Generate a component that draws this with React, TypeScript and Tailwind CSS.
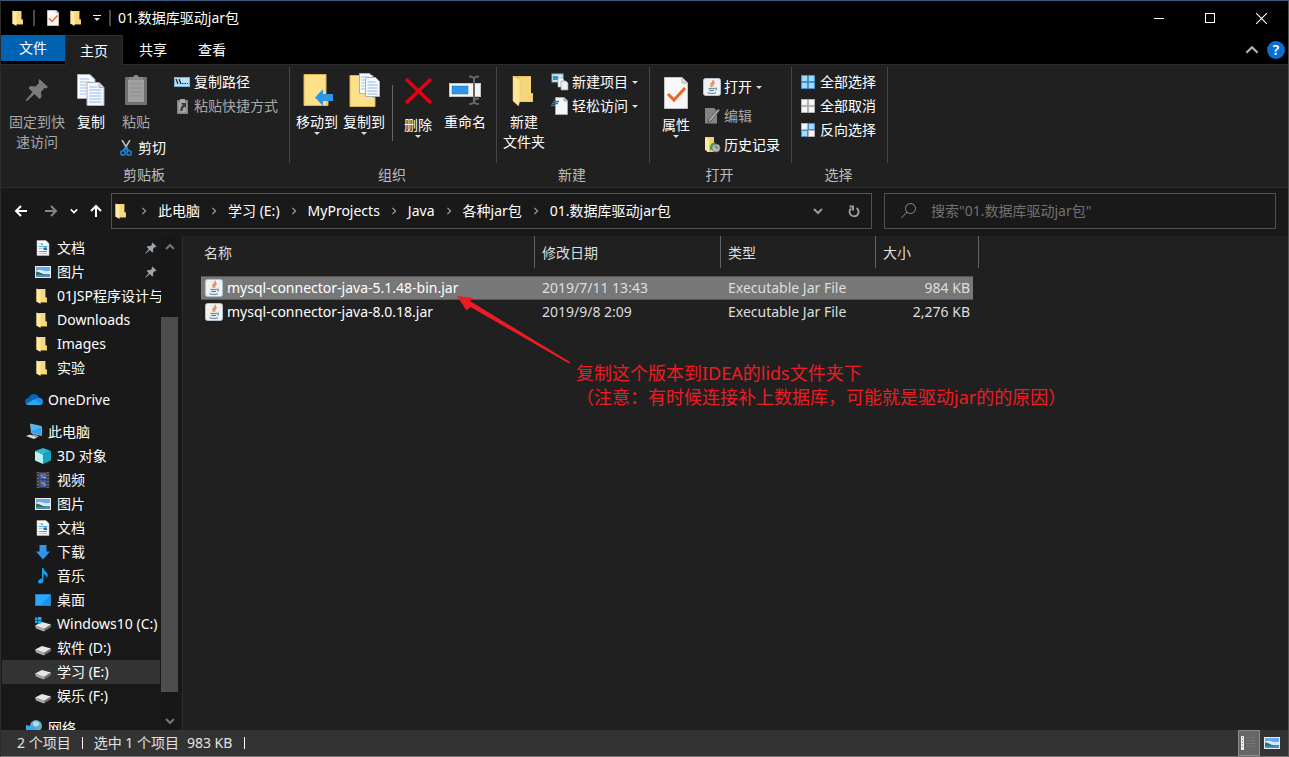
import type { ReactNode } from 'react';

/* ---------- Icons ---------- */

function FolderIcon({ className = 'w-4 h-4' }: { className?: string }) {
  return (
    <svg viewBox="0 0 16 16" className={className} aria-hidden="true">
      <path d="M1.500 1h9v8.500H12V14.500H5L1.500 14Z" fill="#e9bf55" />
      <path d="M5 1h5v8.500h1.500V14H5Z" fill="#f6d87e" />
      <path d="M1.500 .500L5.500 2v14L1.500 13.500Z" fill="#ffeaa8" />
    </svg>
  );
}

function NewFolderIcon() {
  return (
    <svg viewBox="0 0 24 32" className="w-6 h-8" aria-hidden="true">
      <path d="M1 2h18v17h2v9H5Z" fill="#e6bd58" />
      <path d="M7 3h12v17h1.500v7.500H7Z" fill="#f5d67b" />
      <path d="M1 2l7 4v20l-1.500 6L1 27Z" fill="#ffe699" stroke="#e8c566" strokeWidth=".5" />
    </svg>
  );
}

function PinIcon({ className = 'w-6 h-6', fill = '#7b7b7b' }: { className?: string; fill?: string }) {
  return (
    <svg viewBox="0 0 24 24" className={className} aria-hidden="true">
      <path d="M14.500 1l8.500 8-2 1.500-1.500-.5-3.500 4 .5 5-2 2-5-5L2 23l-1.500-.5 7-8.500-4-4 2-2 5 .5L14 5l-.5-2Z" fill={fill} />
    </svg>
  );
}

function CopyIcon() {
  return (
    <svg viewBox="0 0 28 32" className="w-7 h-8" aria-hidden="true">
      <path d="M.5.500H13l5 5v19H.5Z" fill="#f6f9fd" stroke="#a9b0b8" />
      <path d="M3 5h9M3 8h11M3 11h6M3 14h6M3 17h6M3 20h6" stroke="#9cc1ee" />
      <path d="M10 8.500h12l5 5v18H10Z" fill="#f6f9fd" stroke="#a9b0b8" />
      <path d="M22 8.500v5h5" fill="#d7dfe8" stroke="#a9b0b8" />
      <path d="M12.500 13h8M12.500 16h12M12.500 19h12M12.500 22h12M12.500 25h12M12.500 28h12" stroke="#8fb8ea" />
    </svg>
  );
}

function PasteIcon() {
  return (
    <svg viewBox="0 0 24 32" className="w-6 h-8" aria-hidden="true">
      <rect x="1" y="3" width="22" height="28" rx="1" fill="#717171" />
      <rect x="4" y="6" width="16" height="22" fill="#a0a0a0" />
      <path d="M6 10h12M6 14h12M6 18h12M6 22h12" stroke="#8d8d8d" />
      <path d="M5 6V3h4q3-4.500 6 0h4v3Z" fill="#8b8b8b" />
    </svg>
  );
}

function CutIcon() {
  return (
    <svg viewBox="0 0 12 17" className="w-3 h-[17px]" aria-hidden="true">
      <path d="M2 0l6 10M10 0L4 10" stroke="#b9c3cb" strokeWidth="1.500" />
      <circle cx="3" cy="13" r="2.200" fill="none" stroke="#1c86cf" strokeWidth="1.500" />
      <circle cx="9" cy="13" r="2.200" fill="none" stroke="#1c86cf" strokeWidth="1.500" />
      <path d="M6 7L4 11M6 7l2 4" stroke="#1c86cf" strokeWidth="2" />
    </svg>
  );
}

function CopyPathIcon() {
  return (
    <svg viewBox="0 0 16 16" className="w-4 h-4" aria-hidden="true">
      <rect x=".5" y="3.500" width="15" height="9" fill="#b7e0fb" stroke="#7ab4dc" />
      <path d="M2 5l2 5M5 5l2 5M8 9.500h1.500M10.500 9.500H12M13 9.500h1" stroke="#17212b" strokeWidth="1.200" />
    </svg>
  );
}

function PasteShortcutIcon() {
  return (
    <svg viewBox="0 0 16 16" className="w-4 h-4" aria-hidden="true">
      <rect x="3" y="2" width="11" height="14" fill="#828282" />
      <path d="M6 1h5v3H6Z" fill="#a9a9a9" />
      <rect x="4.500" y="4" width="8" height="10.500" fill="#a5a5a5" />
      <path d="M7 5h5v5l-1.600-1.600Q8.500 10 8.500 13H6q0-4 2.700-6.300Z" fill="#3c3c3c" />
    </svg>
  );
}

function MoveToIcon() {
  return (
    <svg viewBox="0 0 32 32" className="w-8 h-8" aria-hidden="true">
      <path d="M3 .500h22v22h2v9H3Z" fill="#ffe08a" stroke="#dcb452" />
      <path d="M25 .500v31h2v-9h-2Z" fill="#eec765" />
      <path d="M14 23.500L22 15v5h10v7H22v5Z" fill="#3195e6" />
    </svg>
  );
}

function CopyToIcon() {
  return (
    <svg viewBox="0 0 32 34" className="w-8 h-[34px]" aria-hidden="true">
      <path d="M2 2.500h23v22h2v9H2Z" fill="#ffe08a" stroke="#dcb452" />
      <path d="M11.500.500h10l4 4v16h-14Z" fill="#f7f9fc" stroke="#a9b0b8" />
      <path d="M13 4h8M13 7h4M13 10h4M13 13h4M13 16h4" stroke="#9cc1ee" />
      <path d="M17.500 4.500h10l4 4v15h-14Z" fill="#f7f9fc" stroke="#a9b0b8" />
      <path d="M19.500 9h8M19.500 12h10M19.500 15h10M19.500 18h10M19.500 21h10" stroke="#8fb8ea" />
    </svg>
  );
}

function DeleteIcon() {
  return (
    <svg viewBox="0 0 32 32" className="w-8 h-8" aria-hidden="true">
      <path d="M4 2l25 24M29 2L4 26" stroke="#e60012" strokeWidth="3.500" />
    </svg>
  );
}

function RenameIcon() {
  return (
    <svg viewBox="0 0 32 32" className="w-8 h-8" aria-hidden="true">
      <rect x=".5" y="9.500" width="31" height="13" fill="#f5f5f5" stroke="#c7c7c7" />
      <rect x="3" y="12" width="16" height="8" fill="#2f96ea" stroke="#1f78c3" strokeWidth=".5" />
      <path d="M20 2.500q5 0 5 3v22q0-3 5-3M30 2.500q-5 0-5 3M20 30q5 0 5-3M30 30q-5 0-5-3" fill="none" stroke="#666" strokeWidth="2" />
    </svg>
  );
}

function NewItemIcon() {
  return (
    <svg viewBox="0 0 18 18" className="w-[18px] h-[18px]" aria-hidden="true">
      <rect x="1" y="1" width="11" height="8" fill="#cfe9f8" stroke="#8bb5cf" />
      <path d="M2 3h5v4H2Z" fill="#3b93b8" />
      <path d="M7 5h4l2 2v7H7Z" fill="#fff" stroke="#aaa" strokeWidth=".7" />
      <path d="M10 8h5l2 2v7h-7Z" fill="#e6effa" stroke="#999" strokeWidth=".7" />
    </svg>
  );
}

function EasyAccessIcon() {
  return (
    <svg viewBox="0 0 18 18" className="w-[18px] h-[18px]" aria-hidden="true">
      <path d="M4.500.500H13l3.500 3.500v13.500h-12Z" fill="#f4f6f8" stroke="#a5a5a5" />
      <path d="M13 .500V4h3.500" fill="#ccc" stroke="#a5a5a5" />
      <path d="M2 4.500h6M1 6.500h6M0 8.500h4" stroke="#1e76bd" strokeWidth="1.300" />
    </svg>
  );
}

function CheckDocIcon({ className = 'w-6 h-8' }: { className?: string }) {
  return (
    <svg viewBox="0 0 24 32" className={className} aria-hidden="true">
      <path d="M.5.500H18l5.500 5.500v25.500H.5Z" fill="#f8f8f8" stroke="#c4c4c4" />
      <path d="M18 .500V6h5.500" fill="#ddd" stroke="#b5b5b5" />
      <path d="M4 17l6 6 11-12" fill="none" stroke="#f26522" strokeWidth="3" />
    </svg>
  );
}

function JarIcon() {
  return (
    <svg viewBox="0 0 18 18" className="w-[18px] h-[18px] shrink-0" aria-hidden="true">
      <rect x=".5" y=".5" width="17" height="17" rx="2" fill="#eef2f4" stroke="#b4c2cb" />
      <path d="M10 2q.8 1.800-1.300 3.200-1.900 1.500.4 4M11.800 4.500Q9 5.800 10.200 8.200" fill="none" stroke="#f0702a" strokeWidth="1.200" />
      <path d="M5.500 10.300q3.500.9 6.500 0M6 12.200q3 .8 5 0M4.500 14.800q4.500 1.300 8.500 0M12.300 10q2.200.2.200 2.300" fill="none" stroke="#5d8296" strokeWidth="1.100" />
    </svg>
  );
}

function EditIcon() {
  return (
    <svg viewBox="0 0 18 18" className="w-[18px] h-[18px]" aria-hidden="true">
      <path d="M2 1h9l3 3v12.500H2Z" fill="#848484" />
      <path d="M17 3L8 14l-3 1 1-3 9-10Z" fill="#a9a9a9" stroke="#444" strokeWidth=".7" />
    </svg>
  );
}

function HistoryIcon() {
  return (
    <svg viewBox="0 0 18 18" className="w-[18px] h-[18px]" aria-hidden="true">
      <path d="M2 1h9v15H4Z" fill="#f1cf6c" />
      <path d="M2 1l4 2v13l-4-2Z" fill="#ffe9a5" />
      <circle cx="13" cy="12" r="4" fill="#b9b9b9" stroke="#777" strokeWidth=".8" />
      <path d="M13 9.500V12h2" fill="none" stroke="#555" />
      <path d="M12 7q-5 1-4 7" fill="none" stroke="#2aa847" strokeWidth="2" />
    </svg>
  );
}

function SelectIcon({ fills }: { fills: string[] }) {
  return (
    <svg viewBox="0 0 16 16" className="w-4 h-4" aria-hidden="true">
      {fills.map((fill, i) => (
        <rect
          key={i}
          x={i % 2 ? 8.5 : 1.5}
          y={i > 1 ? 8.5 : 1.5}
          width="6"
          height="6"
          fill={fill}
          stroke={fill === '#a5d8fd' ? '#3d9be0' : '#bdbdbd'}
          strokeWidth=".8"
        />
      ))}
    </svg>
  );
}

function DocumentIcon() {
  return (
    <svg viewBox="0 0 16 16" className="w-4 h-4" aria-hidden="true">
      <path d="M2 .500h9l3 3v12H2Z" fill="#fafafa" stroke="#bbb" strokeWidth=".6" />
      <path d="M4 3.500h4M4 8.500h4M4 13.500h8" stroke="#b5c3cd" />
      <path d="M6 4.500h2M3.500 6.500h9M4 11.500h8" stroke="#4aa9dd" />
      <path d="M8.500 7.500h3.500v2.500H8.500Z" fill="#20659c" />
    </svg>
  );
}

function PictureIcon() {
  return (
    <svg viewBox="0 0 16 16" className="w-4 h-4" aria-hidden="true">
      <rect x="0" y="2" width="16" height="12" fill="#e8ecef" />
      <rect x="1" y="3" width="14" height="10" fill="#6aa9ee" />
      <path d="M1 6.500q4-1.500 7 0t7 0V10H1Z" fill="#d3ebfb" />
      <path d="M1 7.500q3 0 5 1.500t9 1.500V12H1Z" fill="#2f6f6a" />
      <path d="M1 11h14v2H1Z" fill="#4f8cb8" />
    </svg>
  );
}

function OneDriveIcon() {
  return (
    <svg viewBox="0 0 18 16" className="w-[18px] h-4" aria-hidden="true">
      <path d="M4 13q-4 0-4-3.500T3.500 6Q5 2 9 2q3.500 0 5 4l-6 5Z" fill="#0a63bb" />
      <path d="M8 8l5-2.500q5 .5 5 4T14.500 13H4Z" fill="#1a8fe3" />
      <path d="M1 12l8-4.500 7.500 5Q15.500 13 14.500 13H4q-2 0-3-1Z" fill="#2aa7ee" />
    </svg>
  );
}

function ComputerIcon() {
  return (
    <svg viewBox="0 0 18 18" className="w-[18px] h-[18px]" aria-hidden="true">
      <path d="M5.500 1L16.500 3.500v9L6.500 10Z" fill="#31a3f3" stroke="#a9cbe0" strokeWidth=".7" />
      <path d="M5.500 1L16.500 3.500 7 8Z" fill="#55b6f7" />
      <path d="M8 11l6 2-2 1.500-5-2Z" fill="#999" />
      <path d="M1 13L5 11.500l7 3L9 16Z" fill="#d9dde0" />
    </svg>
  );
}

function CubeIcon() {
  return (
    <svg viewBox="0 0 16 16" className="w-4 h-4" aria-hidden="true">
      <path d="M8 0l8 3-8 3.500L0 3Z" fill="#2bb9d1" />
      <path d="M0 3l8 3.500V16l-8-3.500Z" fill="#baf0f3" />
      <path d="M16 3L8 6.500V16l8-3.500Z" fill="#12a5bd" />
    </svg>
  );
}

function VideoIcon() {
  return (
    <svg viewBox="0 0 16 16" className="w-4 h-4" aria-hidden="true">
      <rect x="1.500" width="13" height="16" fill="#3f3f3f" />
      <path d="M3 0v16M13 0v16" stroke="#9a9a9a" strokeWidth="1" strokeDasharray="1 2" />
      <rect x="4.500" y="1" width="7" height="6" fill="#4067ba" />
      <rect x="4.500" y="8" width="7" height="7" fill="#345cad" />
      <path d="M6 4h2M8 5.500h3M6 11h4M8 13h3" stroke="#e5a33c" strokeWidth="1.200" />
      <path d="M9 2.500h2M5 10h2" stroke="#d53a3a" strokeWidth="1.500" />
    </svg>
  );
}

function DownloadIcon() {
  return (
    <svg viewBox="0 0 16 16" className="w-4 h-4" aria-hidden="true">
      <path d="M4.500 1h7v6.500H15L8 15.500 1 7.500h3.500Z" fill="#3293e8" />
    </svg>
  );
}

function MusicIcon() {
  return (
    <svg viewBox="0 0 16 16" className="w-4 h-4" aria-hidden="true">
      <path d="M7 0h1.500q.5 2.500 3 4.500 2.500 2.500 0 6 .5-3.500-3-4.500V13q-.5 2.500-3 2.500T3 14q0-3 4-3.500Z" fill="#159df2" />
    </svg>
  );
}

function DesktopIcon() {
  return (
    <svg viewBox="0 0 16 16" className="w-4 h-4" aria-hidden="true">
      <rect x=".5" y="2.500" width="15" height="11" fill="#1793ef" stroke="#2d7ec0" />
      <path d="M1 3h14L6 13H1Z" fill="#2ba8ff" />
    </svg>
  );
}

function DriveIcon({ system = false }: { system?: boolean }) {
  return (
    <svg viewBox="0 0 16 16" className="w-4 h-4" aria-hidden="true">
      <path d="M0 9.500L7 6l9 2.500-7 4.500Z" fill="#e6e6e6" />
      <path d="M0 9.500L9 13v2.500L1 12.500Z" fill="#acacac" />
      <path d="M16 8.500L9 13v2.500l7-4.500Z" fill="#777" />
      {system && <path d="M0 1.500h2.500V4H0ZM3 1h3.500v3H3ZM0 4.500h2.500V7H0ZM3 4.500h3.500v3H3Z" fill="#0fb5ec" />}
    </svg>
  );
}

function NetworkIcon() {
  return (
    <svg viewBox="0 0 18 18" className="w-[18px] h-[18px]" aria-hidden="true">
      <circle cx="11" cy="7" r="6" fill="#63a8cb" />
      <path d="M8 3q4-2 7 2l-4 3-3-2Z" fill="#b5dcea" />
      <path d="M1 6l9 2v8l-9-2Z" fill="#35a8f0" />
    </svg>
  );
}

function DetailsIcon() {
  return (
    <svg viewBox="0 0 16 16" className="w-4 h-4" aria-hidden="true">
      <path d="M0 1h3v14H0Z" fill="#eee" />
      <path d="M1.500 2v12" stroke="#888" strokeDasharray="1 2" />
      <path d="M5 2.500h10M5 5.500h10M5 8.500h10M5 11.500h10" stroke="#777" strokeDasharray="4 1" />
    </svg>
  );
}

function Chevron({ className, d = 'M1 3l4 4 4-4', width = 2 }: { className: string; d?: string; width?: number }) {
  return (
    <svg viewBox="0 0 10 10" className={className} fill="none" stroke="currentColor" strokeWidth={width} aria-hidden="true">
      <path d={d} />
    </svg>
  );
}

function Caret() {
  return (
    <svg viewBox="0 0 6 3" className="w-[6px] h-[3px]" aria-hidden="true">
      <path d="M0 0h6L3 3Z" fill="#ddd" />
    </svg>
  );
}

function ArrowIcon({ className, d }: { className: string; d: string }) {
  return (
    <svg viewBox="0 0 14 14" className={className} fill="none" stroke="currentColor" strokeWidth="2" aria-hidden="true">
      <path d={d} />
    </svg>
  );
}

/* ---------- Ribbon ---------- */

function Group({ label, className, children }: { label: string; className: string; children: ReactNode }) {
  return (
    <section className={`flex flex-col shrink-0 ${className}`} aria-label={label}>
      <div className="h-24 mt-0.5 flex items-start border-r border-[#444]">{children}</div>
      <div className="h-6 pr-[3px] leading-6 text-center text-[#bdbdbd]">{label}</div>
    </section>
  );
}

type BigProps = { icon: ReactNode; lines: string[]; caret?: boolean; disabled?: boolean; className: string };

function BigButton({ icon, lines, caret, disabled, className }: BigProps) {
  return (
    <button
      type="button"
      disabled={disabled}
      className={`flex flex-col items-center whitespace-nowrap disabled:text-[#a8a8a8] ${className}`}
    >
      <span className="h-8 mb-1.5 flex items-center justify-center">{icon}</span>
      {lines.map((line) => (
        <span key={line} className="leading-5">{line}</span>
      ))}
      {caret && <Caret />}
    </button>
  );
}

function SmallButton({ icon, label, caret, disabled }: { icon: ReactNode; label: string; caret?: boolean; disabled?: boolean }) {
  return (
    <button type="button" disabled={disabled} className="h-6 flex items-center gap-[3px] whitespace-nowrap disabled:text-[#a8a8a8]">
      <span className="w-[18px] flex justify-center">{icon}</span>
      {label}
      {caret && <span className="ml-px"><Caret /></span>}
    </button>
  );
}

const BLUE = '#a5d8fd';
const WHITE = '#f5f5f5';

function Ribbon() {
  return (
    <div className="h-[124px] shrink-0 flex bg-[#202020] border-y border-[#2d2d2d]">
      <Group label="剪贴板" className="w-[289px]">
        <BigButton icon={<PinIcon />} lines={['固定到快', '速访问']} disabled className="pt-[7px] pl-2" />
        <BigButton icon={<CopyIcon />} lines={['复制']} className="pt-[7px] pl-3" />
        <div className="flex flex-col pl-3">
          <div className="h-[69px] flex">
            <BigButton icon={<PasteIcon />} lines={['粘贴']} disabled className="pt-[7px] pl-[5px]" />
            <div className="flex flex-col pt-[3px] pl-[23px]">
              <SmallButton icon={<CopyPathIcon />} label="复制路径" />
              <SmallButton icon={<PasteShortcutIcon />} label="粘贴快捷方式" disabled />
            </div>
          </div>
          <SmallButton icon={<CutIcon />} label="剪切" />
        </div>
      </Group>

      <Group label="组织" className="w-[207px]">
        <BigButton icon={<MoveToIcon />} lines={['移动到']} caret className="pt-[7px] pl-1.5" />
        <BigButton icon={<CopyToIcon />} lines={['复制到']} caret className="pt-[7px] pl-[5px]" />
        <span className="w-px h-14 mt-[18px] ml-[7px] bg-[#666]" />
        <BigButton icon={<DeleteIcon />} lines={['删除']} caret className="pt-2.5 pl-[9px]" />
        <BigButton icon={<RenameIcon />} lines={['重命名']} className="pt-[7px] pl-2.5" />
      </Group>

      <Group label="新建" className="w-[153px]">
        <BigButton icon={<NewFolderIcon />} lines={['新建', '文件夹']} className="pt-[7px] pl-1.5" />
        <div className="flex flex-col pt-[3px] pl-1.5">
          <SmallButton icon={<NewItemIcon />} label="新建项目" caret />
          <SmallButton icon={<EasyAccessIcon />} label="轻松访问" caret />
        </div>
      </Group>

      <Group label="打开" className="w-[142px]">
        <BigButton icon={<CheckDocIcon />} lines={['属性']} caret className="pt-2.5 pl-3" />
        <div className="flex flex-col pt-2 pl-[13px] gap-[5px]">
          <SmallButton icon={<JarIcon />} label="打开" caret />
          <SmallButton icon={<EditIcon />} label="编辑" disabled />
          <SmallButton icon={<HistoryIcon />} label="历史记录" />
        </div>
      </Group>

      <Group label="选择" className="w-24">
        <div className="flex flex-col pt-[3px] pl-[7px]">
          <SmallButton icon={<SelectIcon fills={[BLUE, BLUE, BLUE, BLUE]} />} label="全部选择" />
          <SmallButton icon={<SelectIcon fills={[WHITE, WHITE, WHITE, WHITE]} />} label="全部取消" />
          <SmallButton icon={<SelectIcon fills={[WHITE, BLUE, BLUE, WHITE]} />} label="反向选择" />
        </div>
      </Group>
    </div>
  );
}

/* ---------- Title bar and tabs ---------- */

function TitleBar() {
  return (
    <header className="h-[34px] shrink-0 flex items-center bg-black">
      <div className="flex items-center pl-2.5">
        <FolderIcon />
        <span className="w-0.5 h-4 ml-1.5 mr-3 bg-[#4a4a4a]" />
        <button type="button" aria-label="属性" className="mr-2.5">
          <CheckDocIcon className="w-3 h-4" />
        </button>
        <button type="button" aria-label="新建文件夹">
          <FolderIcon />
        </button>
        <button type="button" aria-label="自定义快速访问工具栏" className="ml-2 flex flex-col items-center gap-0.5">
          <span className="w-2 h-px bg-white" />
          <Caret />
        </button>
        <span className="w-0.5 h-4 ml-2 mr-[7px] bg-[#4a4a4a]" />
        <h1>01.数据库驱动jar包</h1>
      </div>
      <div className="ml-auto h-full flex text-white">
        <button type="button" aria-label="最小化" className="w-[51px] flex items-center justify-center">
          <span className="w-2.5 h-px bg-white" />
        </button>
        <button type="button" aria-label="最大化" className="w-[51px] flex items-center justify-center">
          <span className="w-2.5 h-2.5 border border-white" />
        </button>
        <button type="button" aria-label="关闭" className="w-[53px] flex items-center justify-center">
          <Chevron className="w-[11px] h-[11px]" d="M0 0l10 10M10 0L0 10" width={1} />
        </button>
      </div>
    </header>
  );
}

function Tabs() {
  return (
    <nav className="h-[29px] shrink-0 flex bg-black">
      <button type="button" className="w-16 h-[26px] bg-[#0063b1]">文件</button>
      <button type="button" className="w-[58px] h-[30px] z-10 bg-[#202020] border border-b-0 border-[#2d2d2d]">主页</button>
      <button type="button" className="w-[60px]">共享</button>
      <button type="button" className="w-[58px]">查看</button>
      <div className="ml-auto flex items-center gap-2 pr-[3px]">
        <button type="button" aria-label="最小化功能区" className="text-[#b5b5b5]">
          <Chevron className="w-3.5 h-3.5" d="M1 7l4-4 4 4" width={1.5} />
        </button>
        <button type="button" aria-label="帮助" className="w-[18px] h-[18px] rounded-full bg-[#0a6fd0] leading-[18px] font-semibold">?</button>
      </div>
    </nav>
  );
}

/* ---------- Address bar ---------- */

const crumbs = ['此电脑', '学习 (E:)', 'MyProjects', 'Java', '各种jar包', '01.数据库驱动jar包'];

function AddressBar() {
  return (
    <div className="h-12 shrink-0 flex items-center bg-[#191919] px-3 pb-0.5">
      <button type="button" aria-label="后退" className="w-[30px] pl-px">
        <ArrowIcon className="w-3.5 h-3.5" d="M13 7H2M7 2L2 7l5 5" />
      </button>
      <button type="button" aria-label="前进" className="w-[26px] pl-px text-[#858585]">
        <ArrowIcon className="w-3.5 h-3.5" d="M1 7h11M7 2l5 5-5 5" />
      </button>
      <button type="button" aria-label="最近浏览的位置" className="w-5 pl-px">
        <Chevron className="w-2 h-2" />
      </button>
      <button type="button" aria-label="向上" className="w-[22px]">
        <ArrowIcon className="w-3.5 h-3.5" d="M7 13V2M2 7l5-5 5 5" />
      </button>
      <div className="flex-1 min-w-0 h-9 flex items-center border border-[#535353] text-white">
        <span className="pl-0.5"><FolderIcon /></span>
        {crumbs.map((crumb) => (
          <span key={crumb} className="flex items-center whitespace-nowrap">
            <span className="w-7 flex justify-center text-[#a0a0a0]">
              <Chevron className="w-2 h-2" d="M3 1l4 4-4 4" width={1.5} />
            </span>
            <a href="#">{crumb}</a>
          </span>
        ))}
        <button type="button" aria-label="以前的位置" className="ml-auto w-9 flex justify-center text-[#999]">
          <Chevron className="w-2.5 h-2.5" />
        </button>
        <button type="button" aria-label="刷新" className="w-[35px] h-full flex items-center justify-center text-[#999]">
          <ArrowIcon className="w-3.5 h-3.5" d="M9.500 4A4.500 4.500 0 1 1 4 4.500M2.500 2.500H7M6 2v4.500" />
        </button>
      </div>
      <label className="w-[392px] shrink-0 ml-3 h-9 flex items-center border border-[#535353] pl-4">
        <svg viewBox="0 0 16 16" className="w-4 h-4 shrink-0" fill="none" stroke="#8a8a8a" aria-hidden="true">
          <circle cx="9.500" cy="5.500" r="5" />
          <path d="M6 9L.500 15" />
        </svg>
        <input
          type="search"
          aria-label="搜索"
          placeholder={'搜索"01.数据库驱动jar包"'}
          className="flex-1 min-w-0 ml-3.5 bg-transparent outline-none placeholder:text-[#717171]"
        />
      </label>
    </div>
  );
}

/* ---------- Navigation pane ---------- */

type NavItem = { label: string; icon: ReactNode; pinned?: boolean; selected?: boolean };

const quickAccess: NavItem[] = [
  { label: '文档', icon: <DocumentIcon />, pinned: true },
  { label: '图片', icon: <PictureIcon />, pinned: true },
  { label: '01JSP程序设计与', icon: <FolderIcon /> },
  { label: 'Downloads', icon: <FolderIcon /> },
  { label: 'Images', icon: <FolderIcon /> },
  { label: '实验', icon: <FolderIcon /> },
];

const thisPc: NavItem[] = [
  { label: '3D 对象', icon: <CubeIcon /> },
  { label: '视频', icon: <VideoIcon /> },
  { label: '图片', icon: <PictureIcon /> },
  { label: '文档', icon: <DocumentIcon /> },
  { label: '下载', icon: <DownloadIcon /> },
  { label: '音乐', icon: <MusicIcon /> },
  { label: '桌面', icon: <DesktopIcon /> },
  { label: 'Windows10 (C:)', icon: <DriveIcon system /> },
  { label: '软件 (D:)', icon: <DriveIcon /> },
  { label: '学习 (E:)', icon: <DriveIcon />, selected: true },
  { label: '娱乐 (F:)', icon: <DriveIcon /> },
];

function RootRow({ label, icon }: { label: string; icon: ReactNode }) {
  return (
    <a href="#" className="h-6 flex items-center gap-1 pl-6 whitespace-nowrap text-white">
      <span className="w-[19px] shrink-0">{icon}</span>
      {label}
    </a>
  );
}

function NavRow({ label, icon, pinned, selected }: NavItem) {
  return (
    <a
      href="#"
      className={`h-6 flex items-center gap-1.5 mx-px pl-[33px] whitespace-nowrap text-white ${selected ? 'bg-[#333]' : ''}`}
    >
      <span className="w-4 shrink-0">{icon}</span>
      {label}
      {pinned && <span className="ml-auto mr-[3px]"><PinIcon className="w-3 h-3" fill="#9aa7b0" /></span>}
    </a>
  );
}

function Sidebar() {
  return (
    <aside className="w-[182px] shrink-0 flex bg-[#191919] border-r border-[#2b2b2b]">
      <nav className="w-40 overflow-hidden">
        {quickAccess.map((item) => <NavRow key={item.label} {...item} />)}
        <div className="my-2">
          <RootRow label="OneDrive" icon={<OneDriveIcon />} />
        </div>
        <RootRow label="此电脑" icon={<ComputerIcon />} />
        {thisPc.map((item) => <NavRow key={item.label} {...item} />)}
        <div className="mt-2">
          <RootRow label="网络" icon={<NetworkIcon />} />
        </div>
      </nav>
      <div className="w-[17px] flex flex-col items-center bg-[#171717] text-[#777]">
        <Chevron className="w-2.5 h-2.5 mt-1.5" d="M1 7l4-4 4 4" />
        <span className="w-full flex-1 mt-[65px] mb-6 bg-[#4d4d4d]" />
        <Chevron className="w-2.5 h-2.5 mb-1" />
      </div>
    </aside>
  );
}

/* ---------- File list ---------- */

const files = [
  { name: 'mysql-connector-java-5.1.48-bin.jar', date: '2019/7/11 13:43', type: 'Executable Jar File', size: '984 KB', selected: true },
  { name: 'mysql-connector-java-8.0.18.jar', date: '2019/9/8 2:09', type: 'Executable Jar File', size: '2,276 KB', selected: false },
];

function FileList() {
  return (
    <main className="relative flex-1 min-w-0 overflow-hidden bg-[#202020] pl-[18px]">
      <table className="w-[778px] table-fixed border-separate border-spacing-0 text-left text-[#dedede]">
        <colgroup>
          <col className="w-[333px]" />
          <col className="w-[186px]" />
          <col className="w-[155px]" />
          <col className="w-[98px]" />
          <col className="w-1.5" />
        </colgroup>
        <thead>
          <tr className="h-10 align-top">
            <th className="p-0 font-normal">
              <div className="relative h-8 pl-[3px] leading-[34px]">
                名称
                <span className="absolute left-40 -top-2 text-[#999]">
                  <Chevron className="w-2 h-2" d="M1 7l4-4 4 4" width={1.5} />
                </span>
              </div>
            </th>
            <th className="p-0 font-normal"><div className="h-8 pl-[7px] leading-[34px] border-l border-[#636363]">修改日期</div></th>
            <th className="p-0 font-normal"><div className="h-8 pl-[7px] leading-[34px] border-l border-[#636363]">类型</div></th>
            <th className="p-0 font-normal"><div className="h-8 pl-[7px] leading-[34px] border-l border-[#636363]">大小</div></th>
            <td className="p-0"><div className="h-8 border-r border-[#636363]" /></td>
          </tr>
        </thead>
        <tbody>
          {files.map((file) => (
            <tr
              key={file.name}
              className={file.selected ? 'h-6 *:border-y *:border-[#565656] *:bg-[#777] *:last:border-0 *:last:bg-transparent' : 'h-6'}
            >
              <td className="p-0 pl-1">
                <a href="#" className="flex items-center gap-1 text-white whitespace-nowrap leading-[22px]">
                  <JarIcon />
                  {file.name}
                </a>
              </td>
              <td className="p-0 pl-2 leading-[22px]">{file.date}</td>
              <td className="p-0 pl-2 leading-[22px]">{file.type}</td>
              <td className="p-0 pr-[3px] text-right leading-[22px]">{file.size}</td>
              <td className="p-0" />
            </tr>
          ))}
        </tbody>
      </table>

      {/* Red note drawn over the list */}
      <div className="absolute left-[274px] top-[60px] text-[#ed1c24]">
        <svg viewBox="0 0 114 68" className="w-[114px] h-[68px]" aria-hidden="true">
          <path d="M0 0l17 2-4 3 100 61-1 1.500L13.500 11 9.500 14.500Z" fill="currentColor" />
        </svg>
      </div>
      <p className="absolute left-[393px] top-[125px] text-[18px] leading-6 whitespace-nowrap text-[#ed1c24]">
        复制这个版本到IDEA的lids文件夹下
        <br />
        （注意：有时候连接补上数据库，可能就是驱动jar的的原因）
      </p>
    </main>
  );
}

function StatusBar() {
  return (
    <footer className="h-[26px] shrink-0 flex items-center bg-[#333] pl-4 text-[#e3e3e3]">
      <span>2 个项目</span>
      <span className="w-px h-3 mx-[11px] bg-white" />
      <span>选中 1 个项目</span>
      <span className="ml-2">983 KB</span>
      <span className="w-px h-3 ml-3 bg-white" />
      <div className="ml-auto h-full flex items-center pr-1">
        <button type="button" aria-label="详细信息" className="w-[22px] h-full flex items-center justify-center bg-[#666] border border-[#8a8a8a]">
          <DetailsIcon />
        </button>
        <button type="button" aria-label="大缩略图" className="w-6 flex justify-center">
          <PictureIcon />
        </button>
      </div>
    </footer>
  );
}

export default function App() {
  return (
    <div className="h-screen flex flex-col overflow-hidden border border-t-[#3a5c80] border-l-[#2b2b2b] border-r-[#555] border-b-[#777] bg-[#202020] font-['Noto_Sans','Noto_Sans_CJK_SC',sans-serif] text-[14px] leading-5 text-white">
      <TitleBar />
      <Tabs />
      <Ribbon />
      <AddressBar />
      <div className="flex-1 min-h-0 flex">
        <Sidebar />
        <FileList />
      </div>
      <StatusBar />
    </div>
  );
}
